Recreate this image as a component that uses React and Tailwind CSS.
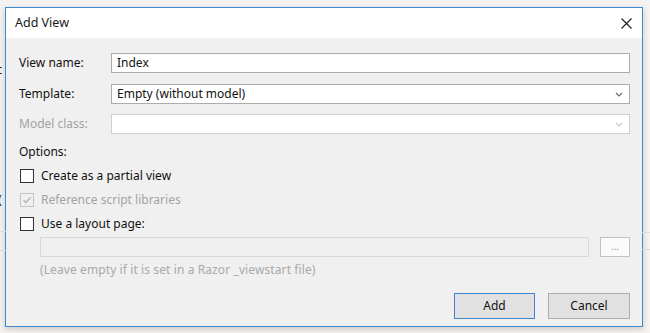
import React from "react";

const font = { fontFamily: '"Noto Sans", "Open Sans", sans-serif' };

const Chevron = ({ light }) => (
  <svg width="8" height="5" viewBox="0 0 8 5" className="mr-[6px]">
    <path d="M1 1l3 3 3-3" fill="none" stroke={light ? "#c8c8c8" : "#6d6d6d"} strokeWidth="1.2" />
  </svg>
);

const Check = ({ checked, disabled }) => (
  <div
    className={`w-[14px] h-[14px] border flex items-center justify-center ${
      disabled ? "border-[#c4c4c4] bg-[#f0f0f0]" : "border-[#333333] bg-white"
    }`}
  >
    {checked && (
      <svg width="10" height="10" viewBox="0 0 10 10">
        <path d="M1.5 5.2l2.3 2.3L8.5 2.5" fill="none" stroke="#b5b5b5" strokeWidth="1.4" />
      </svg>
    )}
  </div>
);

const FieldRow = ({ label, disabled, children, className = "" }) => (
  <div className={`flex items-center h-[20px] ${className}`}>
    <div className={`w-[92px] shrink-0 ${disabled ? "text-[#a3a3a3]" : "text-[#111111]"}`}>{label}</div>
    {children}
  </div>
);

export default function App() {
  return (
    <div className="relative w-[650px] h-[333px] overflow-hidden bg-[#f5f3f2] text-[12px]" style={font}>
      {/* ------ stuff behind the window ------ */}
      <div className="absolute left-[-4px] top-[60px] text-[13px] text-[#222]">c</div>
      <div className="absolute left-[-2px] top-[190px] text-[13px] text-[#222]">(</div>
      <div className="absolute left-0 top-[231px] w-[6px] h-px bg-[#dcdcdc]" />
      <div className="absolute left-0 top-[250px] w-[6px] h-px bg-[#dcdcdc]" />
      <div className="absolute right-0 top-[232px] w-[8px] h-px bg-[#dcdcdc]" />
      <div className="absolute right-0 top-[249px] w-[8px] h-px bg-[#dcdcdc]" />

      {/* ------ dialog ------ */}
      <div className="pl-[5px] pt-[7px]">
        <div className="w-[638px] h-[320px] border border-[#3d8ad0] bg-[#f0f0f0] shadow-[0_2px_6px_rgba(0,0,0,0.18)] flex flex-col">
          <div className="h-[30px] bg-white flex items-center justify-between pl-[9px] pr-[10px]">
            <span className="text-[12.5px] text-[#1a1a1a]">Add View</span>
            <svg width="11" height="11" viewBox="0 0 11 11">
              <path d="M0.5 0.5l10 10M10.5 0.5l-10 10" stroke="#222" strokeWidth="1.2" />
            </svg>
          </div>

          <div className="flex-1 flex flex-col pl-[13px] pr-[12px] pt-[15px]">
            <FieldRow label="View name:">
              <div className="flex-1 h-[20px] bg-white border border-[#acacac] flex items-center px-[5px] text-[#111]">
                Index
              </div>
            </FieldRow>
            <FieldRow label="Template:" className="mt-[11px]">
              <div className="flex-1 h-[20px] bg-white border border-[#acacac] flex items-center justify-between pl-[5px] text-[#111]">
                <span>Empty (without model)</span>
                <Chevron />
              </div>
            </FieldRow>
            <FieldRow label="Model class:" disabled className="mt-[10px]">
              <div className="flex-1 h-[20px] bg-white border border-[#d0d0d0] flex items-center justify-end">
                <Chevron light />
              </div>
            </FieldRow>

            <div className="mt-[10px] h-[16px] leading-[16px] text-[#111]">Options:</div>

            <div className="mt-[4px] flex flex-col">
              <div className="h-[24px] flex items-center gap-[7px] pl-[1px] text-[#111]">
                <Check />
                <span>Create as a partial view</span>
              </div>
              <div className="h-[24px] flex items-center gap-[7px] pl-[1px] text-[#a3a3a3]">
                <Check checked disabled />
                <span>Reference script libraries</span>
              </div>
              <div className="h-[24px] flex items-center gap-[7px] pl-[1px] text-[#111]">
                <Check />
                <span>Use a layout page:</span>
              </div>
            </div>

            <div className="mt-[1px] flex items-center gap-[11px] pl-[21px]">
              <div className="flex-1 h-[20px] bg-[#f0f0f0] border border-[#d9d9d9]" />
              <div className="w-[30px] h-[20px] bg-[#fbfbfb] border border-[#c2c2c2] flex items-center justify-center text-[10px] text-[#9a9a9a] leading-none pb-[3px]">
                ...
              </div>
            </div>
            <div className="mt-[5px] h-[16px] leading-[16px] pl-[21px] text-[#a9a9a9] tracking-[0.1px]">
              (Leave empty if it is set in a Razor _viewstart file)
            </div>

            <div className="mt-[15px] flex justify-end gap-[13px]">
              <button className="w-[81px] h-[26px] bg-[#e1e1e1] border border-[#3b86d0] text-[#111]">Add</button>
              <button className="w-[82px] h-[26px] bg-[#e1e1e1] border border-[#adadad] text-[#111]">Cancel</button>
            </div>
          </div>
        </div>
      </div>
    </div>
  );
}
